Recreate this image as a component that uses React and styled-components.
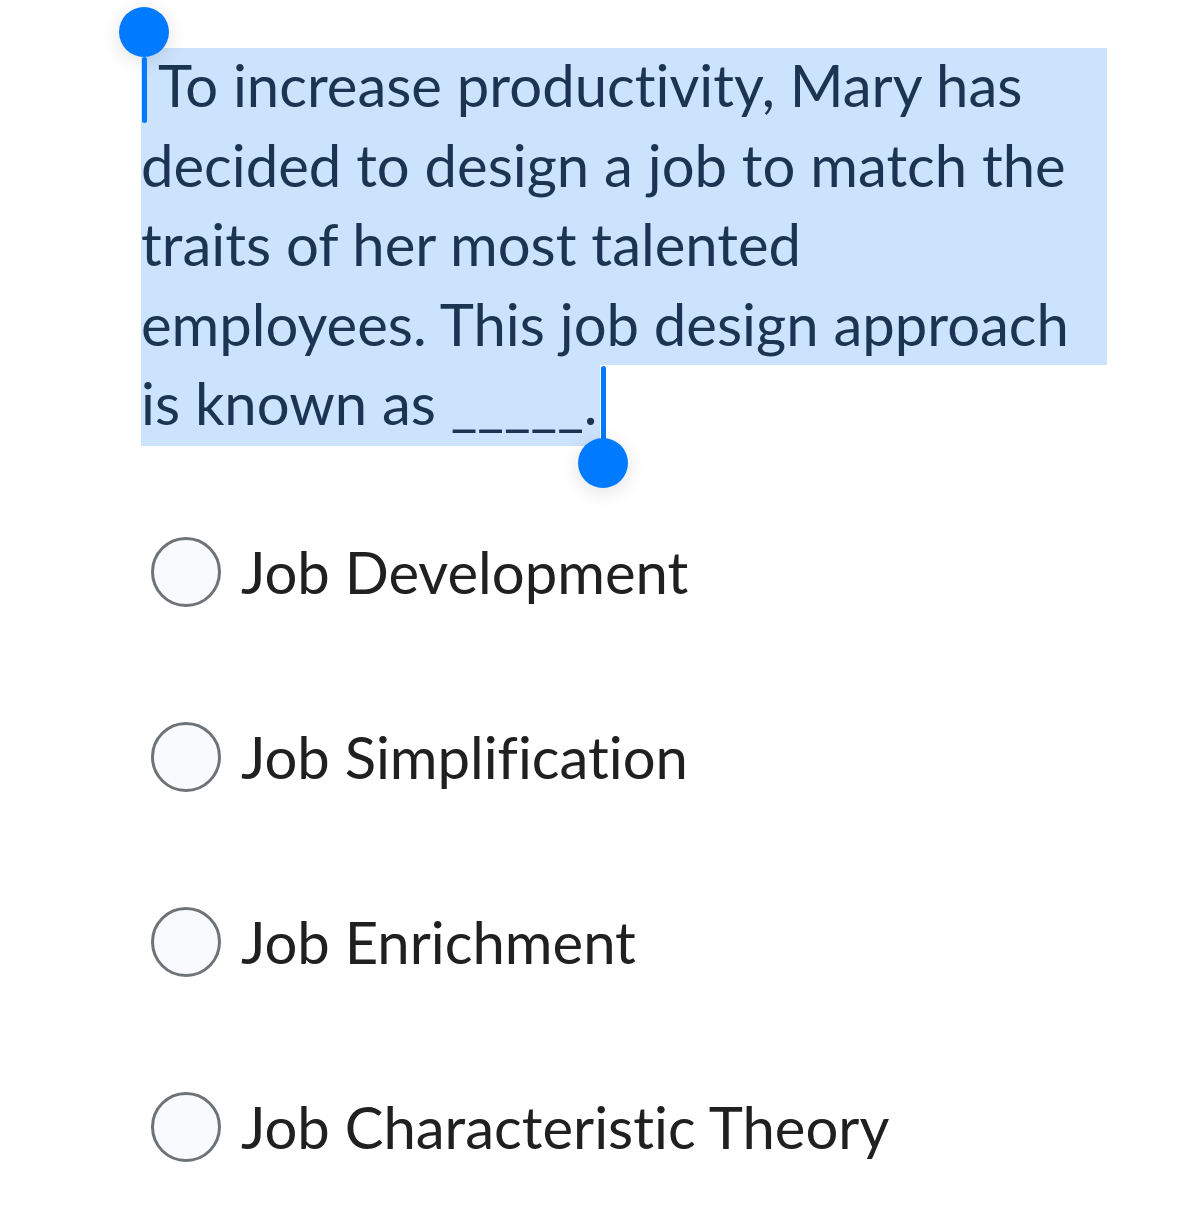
import React from "react";
import styled, { createGlobalStyle } from "styled-components";

const GlobalStyle = createGlobalStyle`
  html, body {
    margin: 0;
    padding: 0;
    background: #fff;
  }
  body {
    font-family: Lato, "Open Sans", sans-serif;
    font-variant-ligatures: none;
  }
`;

const options = [
  "Job Development",
  "Job Simplification",
  "Job Enrichment",
  "Job Characteristic Theory",
];

export default function App() {
  return (
    <>
      <GlobalStyle />
      <Page>
        <QuestionWrap>
          <Question>
            To increase productivity, Mary has decided to design a job to match
            the traits of her most talented employees. This job design approach
            is known as _____.
          </Question>
          <StartHandle>
            <Knob />
            <Stick $height={66} />
          </StartHandle>
          <EndHandle>
            <Stick $height={74} />
            <Knob $overlap />
          </EndHandle>
        </QuestionWrap>
        <Options>
          {options.map((label) => (
            <Option key={label}>
              <Radio />
              <Label>{label}</Label>
            </Option>
          ))}
        </Options>
      </Page>
    </>
  );
}

const Page = styled.div`
  width: 1179px;
  min-height: 1210px;
  padding: 48px 0 0 141px;
  box-sizing: border-box;
`;

const QuestionWrap = styled.div`
  position: relative;
  display: flow-root;
  width: 966px;
`;

const Question = styled.p`
  margin: -3px 0 0;
  padding: 0 24px 3px 0;
  font-size: 58px;
  line-height: 79.5px;
  color: #1b3451;
  text-indent: 17px;
  background:
    linear-gradient(#cce3fd, #cce3fd) left 0 top 3px / 100% 317px no-repeat,
    linear-gradient(#cce3fd, #cce3fd) left bottom / 459px 82px no-repeat;
`;

const StartHandle = styled.div`
  position: absolute;
  left: -22px;
  top: -41px;
  width: 50px;
  display: flex;
  flex-direction: column;
  align-items: center;
`;

const EndHandle = styled.div`
  position: absolute;
  left: 437px;
  top: 318px;
  width: 50px;
  display: flex;
  flex-direction: column;
  align-items: center;
`;

const Knob = styled.div`
  width: 50px;
  height: 50px;
  border-radius: 50%;
  background: #007aff;
  margin-top: ${(p) => (p.$overlap ? "-2px" : "0")};
  box-shadow: 0 4px 20px rgba(0, 0, 0, 0.12);
`;

const Stick = styled.div`
  width: 5px;
  height: ${(p) => p.$height}px;
  border-radius: 3px;
  background: #007aff;
`;

const Options = styled.div`
  display: flex;
  flex-direction: column;
  gap: 115px;
  margin-top: 91px;
  padding-left: 10px;
`;

const Option = styled.div`
  display: flex;
  align-items: center;
  gap: 20px;
  height: 70px;
`;

const Radio = styled.div`
  width: 64px;
  height: 64px;
  border-radius: 50%;
  border: 3px solid #6e7378;
  background: #f8fafd;
  flex-shrink: 0;
`;

const Label = styled.span`
  font-size: 58px;
  color: #202020;
  line-height: 1;
`;
